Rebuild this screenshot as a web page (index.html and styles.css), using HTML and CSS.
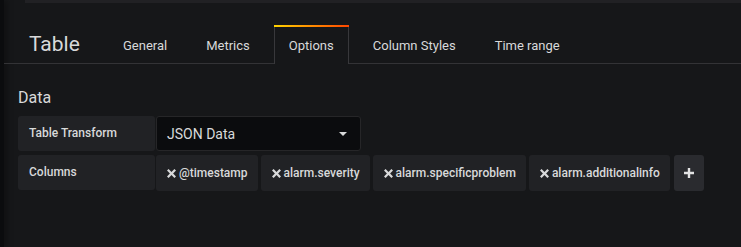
FILE: index.html
```html
<!DOCTYPE html>
<html lang="en">
<head>
    <meta charset="UTF-8">
    <meta name="viewport" content="width=device-width, initial-scale=1.0">
    <title>Table - Options</title>
    <link rel="stylesheet" href="styles.css">
</head>
<body>

<div class="side"></div>

<div class="main">
    <div class="topbar"></div>

    <div class="tabs">
        <h2 class="tabs-title">Table</h2>
        <ul class="tab-list">
            <li class="tab">General</li>
            <li class="tab">Metrics</li>
            <li class="tab active">Options</li>
            <li class="tab">Column Styles</li>
            <li class="tab">Time range</li>
        </ul>
    </div>

    <div class="section">
        <h5 class="section-heading">Data</h5>

        <div class="form-row">
            <label class="form-label">Table Transform</label>
            <div class="form-select">
                <span>JSON Data</span>
                <span class="caret"></span>
            </div>
        </div>

        <div class="form-row">
            <label class="form-label">Columns</label>
            <div class="chip"><svg class="chip-x" viewBox="0 0 9 9"><path d="M1.6 0L4.5 2.9 7.4 0 9 1.6 6.1 4.5 9 7.4 7.4 9 4.5 6.1 1.6 9 0 7.4 2.9 4.5 0 1.6z"/></svg>@timestamp</div>
            <div class="chip"><svg class="chip-x" viewBox="0 0 9 9"><path d="M1.6 0L4.5 2.9 7.4 0 9 1.6 6.1 4.5 9 7.4 7.4 9 4.5 6.1 1.6 9 0 7.4 2.9 4.5 0 1.6z"/></svg>alarm.severity</div>
            <div class="chip"><svg class="chip-x" viewBox="0 0 9 9"><path d="M1.6 0L4.5 2.9 7.4 0 9 1.6 6.1 4.5 9 7.4 7.4 9 4.5 6.1 1.6 9 0 7.4 2.9 4.5 0 1.6z"/></svg>alarm.specificproblem</div>
            <div class="chip"><svg class="chip-x" viewBox="0 0 9 9"><path d="M1.6 0L4.5 2.9 7.4 0 9 1.6 6.1 4.5 9 7.4 7.4 9 4.5 6.1 1.6 9 0 7.4 2.9 4.5 0 1.6z"/></svg>alarm.additionalinfo</div>
            <div class="chip chip-add">
                <svg width="10" height="10" viewBox="0 0 10 10">
                    <path d="M3.8 0h2.4v3.8H10v2.4H6.2V10H3.8V6.2H0V3.8h3.8z" fill="#e3e3e4"/>
                </svg>
            </div>
        </div>
    </div>
</div>

</body>
</html>
```

FILE: styles.css
```css
* {
    box-sizing: border-box;
}

body {
    margin: 0;
    height: 247px;
    display: flex;
    background-color: #161719;
    font-family: Roboto, 'Liberation Sans', sans-serif;
    color: #d8d9da;
    overflow: hidden;
}

.side {
    width: 4px;
    flex: none;
    background-color: #0b0c0e;
    box-shadow: 2px 0 6px rgba(0, 0, 0, 0.5);
}

.main {
    flex: 1;
}

.topbar {
    height: 3px;
    margin-left: 21px;
    background-color: #212124;
}

.tabs {
    display: flex;
    align-items: flex-end;
    margin-top: 22px;
    border-bottom: 1px solid #333336;
}

.tabs-title {
    margin: 0 0 0 25px;
    width: 79px;
    font-size: 21px;
    font-weight: 400;
    line-height: 38px;
    color: #d8d9da;
}

.tab-list {
    display: flex;
    list-style: none;
    margin: 0 0 -1px 0;
    padding: 0;
}

.tab {
    padding: 0 15px;
    margin-right: 9px;
    height: 39px;
    line-height: 38px;
    font-size: 13px;
    color: #d8d9da;
    border-top: 2px solid transparent;
}

.tab.active {
    background-color: #161719;
    border-image: linear-gradient(90deg, #ffd500, #ff4400) 1;
    border-image-width: 2px 0 0 0;
    box-shadow: inset 1px 0 0 #38383b, inset -1px 0 0 #38383b;
}

.section {
    padding: 0 0 0 14px;
}

.section-heading {
    margin: 25px 0 9px 0;
    font-size: 16px;
    font-weight: 400;
    line-height: 18px;
    color: #d8d9da;
}

.form-row {
    display: flex;
    margin-bottom: 4px;
}

.form-label {
    width: 137px;
    height: 35px;
    padding: 0 11px;
    margin-right: 1px;
    line-height: 35px;
    font-size: 12px;
    font-weight: 500;
    background-color: #212225;
    border-radius: 3px;
    color: #d8d9da;
}

.form-select {
    display: flex;
    justify-content: space-between;
    align-items: center;
    width: 205px;
    height: 35px;
    padding: 0 10px;
    font-size: 14px;
    background-color: #0b0c0e;
    border: 1px solid #262628;
    border-radius: 3px;
}

.caret {
    width: 0;
    height: 0;
    margin-right: 3px;
    border-left: 4px solid transparent;
    border-right: 4px solid transparent;
    border-top: 4px solid #d8d9da;
}

.chip {
    display: flex;
    align-items: center;
    height: 36px;
    padding: 0 10px 0 11px;
    margin-right: 3px;
    font-size: 12px;
    font-weight: 500;
    background-color: #212225;
    border-radius: 3px;
    color: #d8d9da;
}

.chip-x {
    width: 9px;
    height: 9px;
    margin-right: 3px;
    fill: #d8d9da;
}

.chip-add {
    padding: 0 10px;
    background-color: #2a2b2f;
    margin-left: 1px;
}
```
